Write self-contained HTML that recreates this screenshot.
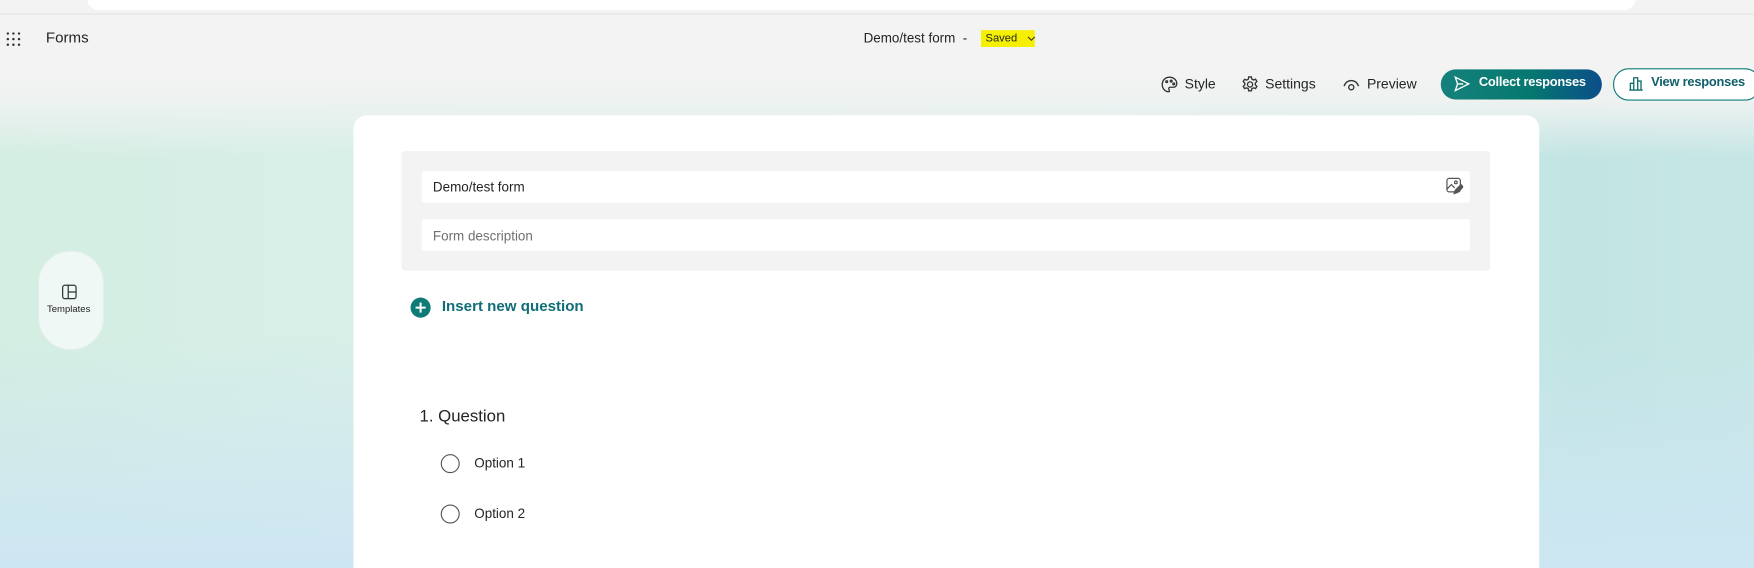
<!DOCTYPE html>
<html><head><meta charset="utf-8">
<style>
html,body{margin:0;padding:0;width:1754px;height:568px;overflow:hidden;}
#w{position:absolute;left:0;top:0;width:1568px;height:508px;transform:scale(1.11862);transform-origin:0 0;overflow:hidden;
font-family:"Liberation Sans",sans-serif;color:#242424;
background:linear-gradient(180deg,#f3f3f3 0px,#f3f3f3 60px,#eef2f1 90px,rgba(0,0,0,0) 140px),
linear-gradient(90deg,#d3eee2 0%,#d8efe8 20%,#d6eeea 60%,#c2e5e3 90%,#c6e6e5 100%);}
#bot{position:absolute;left:0;top:300px;width:1568px;height:208px;background:linear-gradient(180deg,rgba(210,235,240,0),#cde6f3);}
.t{position:absolute;white-space:nowrap;}
</style></head><body><div id="w">
<div id="bot"></div>
<div style="position:absolute;left:0;top:0;width:1568px;height:12px;background:#f3f3f3;border-bottom:1px solid #e4e4e4"></div>
<div style="position:absolute;left:78px;top:-20px;width:1384px;height:29px;background:#fff;border-radius:10px"></div>
<svg style="position:absolute;left:5px;top:28px" width="16" height="16" viewBox="0 0 16 16" fill="#333"><circle cx="2" cy="2" r="1.1"/><circle cx="7" cy="2" r="1.1"/><circle cx="12" cy="2" r="1.1"/><circle cx="2" cy="7" r="1.1"/><circle cx="7" cy="7" r="1.1"/><circle cx="12" cy="7" r="1.1"/><circle cx="2" cy="12" r="1.1"/><circle cx="7" cy="12" r="1.1"/><circle cx="12" cy="12" r="1.1"/></svg>
<div class="t" style="left:41px;top:26px;font-size:13.5px;">Forms</div>
<div class="t" style="left:772px;top:27px;font-size:12px;">Demo/test form &nbsp;-</div>
<div style="position:absolute;left:877px;top:27px;width:48px;height:15px;background:#f5f000;"></div>
<div class="t" style="left:881px;top:29px;font-size:10px;">Saved</div>
<svg style="position:absolute;left:918px;top:32px" width="8" height="6" viewBox="0 0 8 6" fill="none" stroke="#333" stroke-width="1"><path d="M1 1l3 3 3-3"/></svg>
<svg style="position:absolute;left:1037px;top:67px" width="17" height="17" viewBox="0 0 17 17" fill="none" stroke="#333" stroke-width="1.2"><path d="M8.5 2C4.5 2 2 5 2 8.5 2 12 4.5 15 7.5 15c1.2 0 1-1.3.5-2-.6-1 0-2 1.2-2H12c2 0 3-1.5 3-3.2C15 4.5 12 2 8.5 2z"/><circle cx="6" cy="6" r=".8"/><circle cx="10" cy="5.5" r=".8"/><circle cx="12.3" cy="8" r=".8"/></svg>
<div class="t" style="left:1059px;top:68px;font-size:12.5px;">Style</div>
<svg style="position:absolute;left:1109px;top:67px" width="17" height="17" viewBox="0 0 17 17" fill="none" stroke="#333" stroke-width="1.2"><circle cx="8.5" cy="8.5" r="2.3"/><path d="M7.3 1.8h2.4l.4 1.9 1.5.8 1.8-.7 1.2 2-1.4 1.4v1.6l1.4 1.4-1.2 2-1.8-.7-1.5.8-.4 1.9H7.3l-.4-1.9-1.5-.8-1.8.7-1.2-2 1.4-1.4V7.3L2.4 5.9l1.2-2 1.8.7 1.5-.8z"/></svg>
<div class="t" style="left:1131px;top:68px;font-size:12.5px;">Settings</div>
<svg style="position:absolute;left:1200px;top:69px" width="16" height="14" viewBox="0 0 16 14" fill="none" stroke="#333" stroke-width="1.2"><path d="M1.5 8C3 4 5.5 3 8 3s5 1 6.5 5"/><circle cx="8" cy="9" r="2.3"/></svg>
<div class="t" style="left:1222px;top:68px;font-size:12.5px;">Preview</div>
<div style="position:absolute;left:1288px;top:62px;width:144px;height:27px;border-radius:14px;background:linear-gradient(90deg,#16817c,#05786f 55%,#0b4e8a);"></div>
<svg style="position:absolute;left:1299px;top:67px" width="16" height="16" viewBox="0 0 16 16" fill="none" stroke="#fff" stroke-width="1.2"><path d="M2 2l12 6-12 6 2-6z M4 8h5"/></svg>
<div class="t" style="left:1322px;top:68px;font-size:11.5px;font-weight:bold;color:#fff;letter-spacing:-0.2px;">Collect responses</div>
<div style="position:absolute;left:1442px;top:61px;width:130px;height:27px;border-radius:14px;border:1px solid #0f7b76;background:#fff;"></div>
<svg style="position:absolute;left:1455px;top:67px" width="15" height="15" viewBox="0 0 15 15" fill="none" stroke="#0f6f6b" stroke-width="1.2"><path d="M1.5 13.5h12M2.5 13.5V7.5h3v6M5.5 13.5V2.5h3.5v11M9 13.5V5.5h3v8"/></svg>
<div class="t" style="left:1476px;top:68px;font-size:11.5px;font-weight:bold;color:#0f5f6a;letter-spacing:-0.2px;">View responses</div>
<div style="position:absolute;left:34px;top:224px;width:57px;height:87px;border-radius:29px;background:#eff8f5;border:1px solid #e3efeb"></div>
<svg style="position:absolute;left:55px;top:254px" width="14" height="14" viewBox="0 0 14 14" fill="none" stroke="#333" stroke-width="1.1"><rect x="1" y="1" width="12" height="12" rx="2"/><path d="M6 1v12M6 7h7"/></svg>
<div class="t" style="left:42px;top:271px;font-size:8.5px;">Templates</div>
<div style="position:absolute;left:316px;top:103px;width:1060px;height:420px;background:#fff;border-radius:12px;"></div>
<div style="position:absolute;left:359px;top:135px;width:973px;height:107px;background:#f3f3f3;border-radius:3px;"></div>
<div style="position:absolute;left:377px;top:153px;width:937px;height:28px;background:#fff;border-radius:2px;"></div>
<div class="t" style="left:387px;top:160px;font-size:12px;">Demo/test form</div>
<svg style="position:absolute;left:1292px;top:158px" width="16" height="16" viewBox="0 0 16 16" fill="none" stroke="#555" stroke-width="1.1"><rect x="1.5" y="1.5" width="12" height="12" rx="2"/><circle cx="9.5" cy="5" r="1.2"/><path d="M1.5 11l4-4 3 3"/><path d="M8 15l1-3 5-5 2 2-5 5z" fill="#555"/></svg>
<div style="position:absolute;left:377px;top:196px;width:937px;height:28px;background:#fff;border-radius:2px;"></div>
<div class="t" style="left:387px;top:204px;font-size:12px;color:#707070;">Form description</div>
<div style="position:absolute;left:367px;top:266px;width:18px;height:18px;border-radius:50%;background:#0f7b76;"></div>
<svg style="position:absolute;left:367px;top:266px" width="18" height="18" viewBox="0 0 18 18" stroke="#fff" stroke-width="1.8"><path d="M9 4.5v9M4.5 9h9"/></svg>
<div class="t" style="left:395px;top:266px;font-size:13.5px;font-weight:bold;color:#0f6e78;">Insert new question</div>
<div class="t" style="left:375px;top:364px;font-size:15px;">1. Question</div>
<div style="position:absolute;left:394px;top:406px;width:15px;height:15px;border-radius:50%;border:1px solid #555;"></div>
<div class="t" style="left:424px;top:407px;font-size:12px;">Option 1</div>
<div style="position:absolute;left:394px;top:451px;width:15px;height:15px;border-radius:50%;border:1px solid #555;"></div>
<div class="t" style="left:424px;top:452px;font-size:12px;">Option 2</div>
</div></body></html>
